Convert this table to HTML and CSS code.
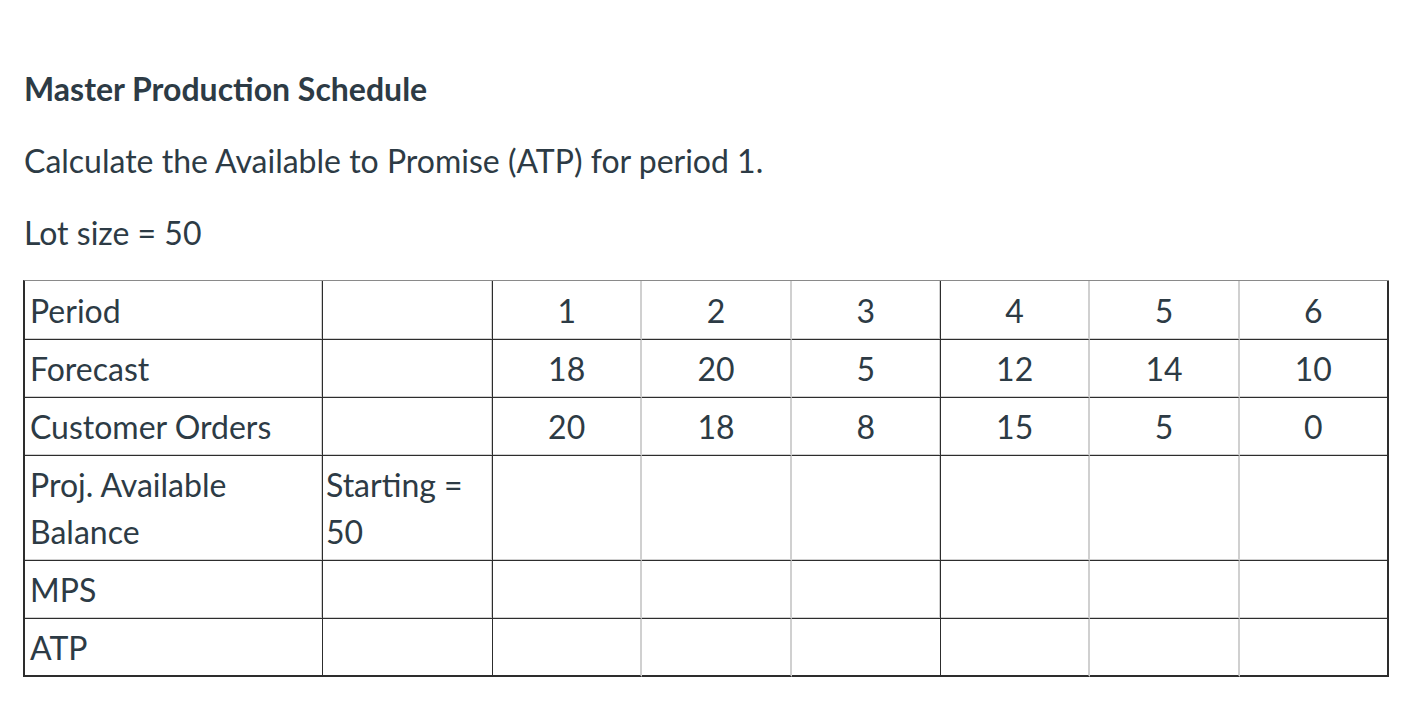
FILE: index.html
```html
<!DOCTYPE html>
<html lang="en">
<head>
<meta charset="utf-8">
<title>Master Production Schedule</title>
<link rel="stylesheet" href="styles.css">
</head>
<body>
<main class="page">
  <p class="title">Master Production Schedule</p>
  <p class="text">Calculate the Available to Promise (ATP) for period 1.</p>
  <p class="text">Lot size = 50</p>
  <table class="mps">
    <colgroup>
      <col class="c-label"><col class="c-start">
      <col class="c-per"><col class="c-per"><col class="c-per">
      <col class="c-per"><col class="c-per"><col class="c-per">
    </colgroup>
    <tbody>
      <tr class="first">
        <td class="label">Period</td><td class="start dk"></td>
        <td class="num">1</td><td class="num">2</td><td class="num dk">3</td>
        <td class="num">4</td><td class="num">5</td><td class="num last">6</td>
      </tr>
      <tr>
        <td class="label">Forecast</td><td class="start dk"></td>
        <td class="num">18</td><td class="num">20</td><td class="num dk">5</td>
        <td class="num">12</td><td class="num">14</td><td class="num last">10</td>
      </tr>
      <tr>
        <td class="label">Customer Orders</td><td class="start dk"></td>
        <td class="num">20</td><td class="num">18</td><td class="num dk">8</td>
        <td class="num">15</td><td class="num">5</td><td class="num last">0</td>
      </tr>
      <tr class="tall">
        <td class="label">Proj. Available<br>Balance</td><td class="start dk">Starting =<br>50</td>
        <td class="num"></td><td class="num"></td><td class="num dk"></td>
        <td class="num"></td><td class="num"></td><td class="num last"></td>
      </tr>
      <tr>
        <td class="label">MPS</td><td class="start dk"></td>
        <td class="num"></td><td class="num"></td><td class="num dk"></td>
        <td class="num"></td><td class="num"></td><td class="num last"></td>
      </tr>
      <tr class="final">
        <td class="label">ATP</td><td class="start dk"></td>
        <td class="num"></td><td class="num"></td><td class="num dk"></td>
        <td class="num"></td><td class="num"></td><td class="num last"></td>
      </tr>
    </tbody>
  </table>
</main>
</body>
</html>
```

FILE: styles.css
```css
html, body {
  margin: 0;
  padding: 0;
  background: #ffffff;
}

.page {
  padding: 66px 0 0 24px;
  font-family: Lato, "Open Sans", sans-serif;
  font-size: 32px;
  color: #2d3b45;
}

.title {
  margin: 0;
  font-weight: 700;
  line-height: 46px;
}

.text {
  margin: 26px 0 0 0;
  line-height: 46px;
}

.mps {
  margin-top: 24px;
  margin-left: -1px;
  border-collapse: separate;
  border-spacing: 0;
  width: 1366px;
  table-layout: fixed;
  border-top: 1px solid #8a8a8a;
  border-left: 2px solid #2d2d2d;
}

.c-label { width: 298px; }
.c-start { width: 170px; }

.mps td {
  height: 57px;
  padding: 0 5px;
  line-height: 47px;
  vertical-align: middle;
  border-bottom: 1px solid #2d2d2d;
  border-right: 2px solid #d0d0d0;
  box-shadow: inset 0 -1px 0 #d0d0d0;
}

.mps td.label {
  padding-left: 5px;
  border-right: 1px solid #2d2d2d;
  box-shadow: inset 0 -1px 0 #d0d0d0, inset -1px 0 0 #d0d0d0;
}

.mps td.start {
  padding-left: 3px;
  border-right: 2px solid #d0d0d0;
}

.mps td.num {
  text-align: center;
}

.mps td.dk {
  border-right: 1px solid #2d2d2d;
  box-shadow: inset 0 -1px 0 #d0d0d0, inset -1px 0 0 #d0d0d0;
}

.mps td.last {
  border-right: 2px solid #2d2d2d;
}

.mps tr.first td {
  height: 58px;
}

.mps tr.tall td {
  height: 104px;
}

.mps tr.final td {
  height: 56px;
  border-bottom: 2px solid #2d2d2d;
  box-shadow: none;
}
```
